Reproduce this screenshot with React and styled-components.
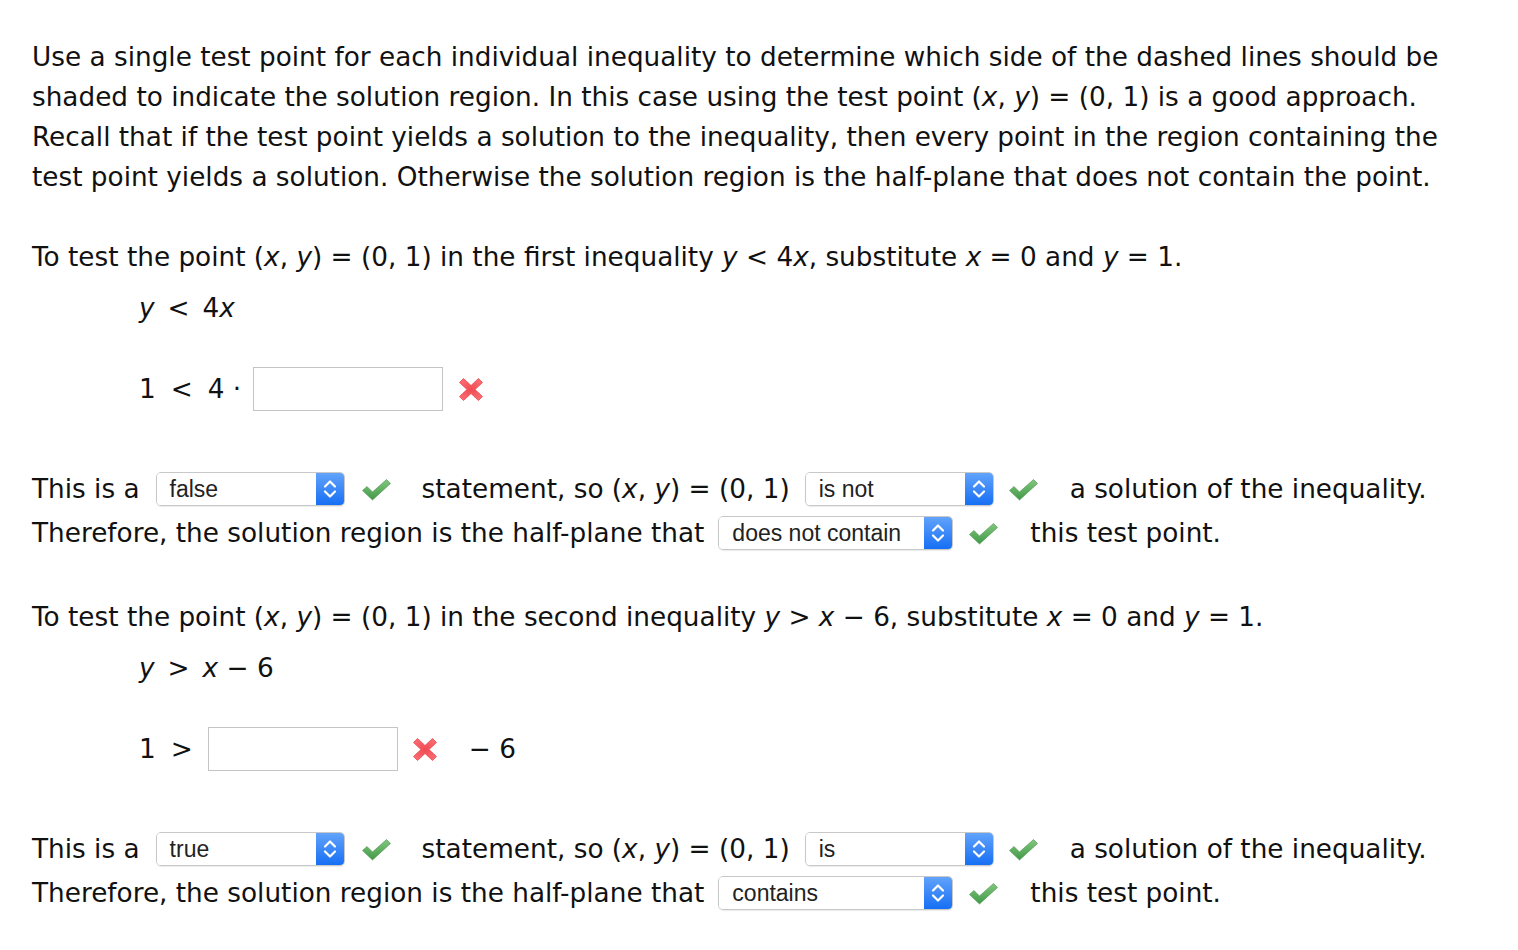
import React from 'react';
import styled, { createGlobalStyle } from 'styled-components';

const Global = createGlobalStyle`
  body {
    margin: 0;
    background: #fff;
    font-family: "DejaVu Sans", Verdana, sans-serif;
    color: #111;
  }
`;

const Page = styled.div`
  padding: 37px 0 0 32px;
  font-size: 26.3px;
  width: 1480px;
`;

const Para = styled.p`
  margin: 0;
  line-height: 40px;
  white-space: nowrap;
`;

const Line = styled.div`
  display: flex;
  align-items: center;
  height: 40px;
  margin-top: ${p => p.$top || 0}px;
  padding-left: ${p => p.$indent || 0}px;
  white-space: pre;
`;

const V = styled.i`
  font-style: italic;
`;

const Op = styled.span`
  margin: 0 ${p => p.$gap || 13}px;
`;

const Blank = styled.span`
  display: inline-block;
  width: 190px;
  height: 44px;
  box-sizing: border-box;
  border: 1px solid #c4c4c4;
  background: #fff;
  margin-left: ${p => p.$left || 0}px;
`;

const SelectBox = styled.span`
  display: inline-flex;
  align-items: stretch;
  width: ${p => p.$w}px;
  height: 34px;
  box-sizing: border-box;
  border: 1px solid #c8c8c8;
  border-radius: 5px;
  margin-left: ${p => p.$left || 0}px;
  overflow: hidden;
  font-family: "Liberation Sans", Arial, sans-serif;
  font-size: 23px;
  color: #222;
  box-shadow: 0 1px 1px rgba(0,0,0,0.08);
`;

const SelectText = styled.span`
  flex: 1;
  display: flex;
  align-items: center;
  padding-left: 13px;
  background: #fff;
`;

const Stepper = styled.span`
  width: 28px;
  display: flex;
  align-items: center;
  justify-content: center;
  background: linear-gradient(#62a3fb, #166ff4);
`;

const IconWrap = styled.span`
  display: inline-flex;
  margin-left: ${p => p.$left || 0}px;
  margin-right: ${p => p.$right || 0}px;
`;

const Select = ({ value, w, left }) => (
  <SelectBox $w={w} $left={left}>
    <SelectText>{value}</SelectText>
    <Stepper>
      <svg width="16" height="24" viewBox="0 0 16 24">
        <path d="M3 9.5 L8 4.5 L13 9.5 M3 14.5 L8 19.5 L13 14.5" fill="none" stroke="#fff" strokeWidth="2.2" strokeLinecap="round" strokeLinejoin="round" />
      </svg>
    </Stepper>
  </SelectBox>
);

const Check = ({ left, right }) => (
  <IconWrap $left={left} $right={right}>
    <svg width="31" height="25" viewBox="0 0 31 25">
      <defs>
        <linearGradient id="cg" x1="0" y1="0" x2="0" y2="1">
          <stop offset="0" stopColor="#82c77f" />
          <stop offset="1" stopColor="#3f9a45" />
        </linearGradient>
      </defs>
      <path d="M1.5 13.5 L6 9.5 L11.5 15 L25.5 2.5 L29.5 6.5 L11.5 23 Z" fill="url(#cg)" stroke="#4a8f4c" strokeWidth="0.6" strokeLinejoin="round" />
    </svg>
  </IconWrap>
);

const Cross = ({ left, right }) => (
  <IconWrap $left={left} $right={right}>
    <svg width="28" height="27" viewBox="0 0 28 27">
      <defs>
        <radialGradient id="xg" cx="0.5" cy="0.5" r="0.6">
          <stop offset="0" stopColor="#f04a52" />
          <stop offset="1" stopColor="#fa6e74" />
        </radialGradient>
      </defs>
      <path d="M2.5 6.5 L6.5 2.5 L14 9.5 L21.5 2.5 L25.5 6.5 L18 13.5 L25.5 20.5 L21.5 24.5 L14 17.5 L6.5 24.5 L2.5 20.5 L10 13.5 Z" fill="url(#xg)" stroke="#e8454c" strokeWidth="0.8" strokeLinejoin="round" />
    </svg>
  </IconWrap>
);

const Point = () => (
  <>(<V>x</V>, <V>y</V>) = (0, 1)</>
);

const Conclusion = ({ tf, is, contains, top }) => (
  <>
    <Line $top={top}>
      This is a
      <Select value={tf} w={189} left={16} />
      <Check left={16} right={30} />
      statement, so <Point />
      <Select value={is} w={189} left={15} />
      <Check left={14} right={31} />
      a solution of the inequality.
    </Line>
    <Line $top={4}>
      Therefore, the solution region is the half-plane that
      <Select value={contains} w={235} left={14} />
      <Check left={15} right={31} />
      this test point.
    </Line>
  </>
);

export default function App() {
  return (
    <>
      <Global />
      <Page>
        <Para>
          Use a single test point for each individual inequality to determine which side of the dashed lines should be<br />
          shaded to indicate the solution region. In this case using the test point <Point /> is a good approach.<br />
          Recall that if the test point yields a solution to the inequality, then every point in the region containing the<br />
          test point yields a solution. Otherwise the solution region is the half-plane that does not contain the point.
        </Para>

        <Line $top={40}>
          To test the point <Point /> in the first inequality <V>y</V> &lt; 4<V>x</V>, substitute <V>x</V> = 0 and <V>y</V> = 1.
        </Line>
        <Line $top={11} $indent={107}>
          <V>y</V><Op>&lt;</Op>4<V>x</V>
        </Line>
        <Line $top={41} $indent={107}>
          1<Op $gap={15}>&lt;</Op>4 ·
          <Blank $left={12} />
          <Cross left={14} />
        </Line>

        <Conclusion tf="false" is="is not" contains="does not contain" top={60} />

        <Line $top={44}>
          To test the point <Point /> in the second inequality <V>y</V> &gt; <V>x</V> − 6, substitute <V>x</V> = 0 and <V>y</V> = 1.
        </Line>
        <Line $top={11} $indent={107}>
          <V>y</V><Op>&gt;</Op><V>x</V> − 6
        </Line>
        <Line $top={41} $indent={107}>
          1<Op $gap={15}>&gt;</Op>
          <Blank $left={0} />
          <Cross left={13} right={30} />
          − 6
        </Line>

        <Conclusion tf="true" is="is" contains="contains" top={60} />
      </Page>
    </>
  );
}
